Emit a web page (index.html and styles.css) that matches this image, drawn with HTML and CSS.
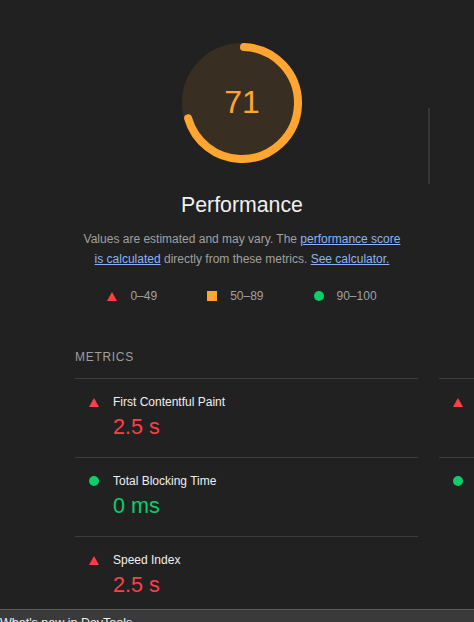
FILE: index.html
```
<!DOCTYPE html>
<html lang="en">
<head>
<meta charset="utf-8">
<title>Lighthouse – Performance</title>
<link rel="stylesheet" href="styles.css">
</head>
<body>
  <div class="app">
    <main class="report">
      <section class="cat-header">
        <div class="header-row">
          <div class="gauge-col">
            <div class="gauge">
              <svg class="gauge-svg" viewBox="0 0 120 120" width="120" height="120">
                <circle class="gauge-base" r="56" cx="60" cy="60" stroke-width="8"></circle>
                <circle class="gauge-arc" r="56" cx="60" cy="60" stroke-width="8"></circle>
              </svg>
              <div class="gauge-score">71</div>
            </div>
            <div class="gauge-label">Performance</div>
          </div>
          <div class="header-separator"></div>
        </div>
        <p class="description">Values are estimated and may vary. The <a href="#">performance score is calculated</a> directly from these metrics. <a href="#">See calculator.</a></p>
        <div class="legend">
          <span class="legend-item"><span class="icon icon-fail"></span>0–49</span>
          <span class="legend-item"><span class="icon icon-average"></span>50–89</span>
          <span class="legend-item"><span class="icon icon-pass"></span>90–100</span>
        </div>
      </section>

      <section class="metrics">
        <div class="metrics-title">Metrics</div>
        <div class="metrics-grid">
          <div class="metric">
            <div class="metric-icon"><span class="icon icon-fail"></span></div>
            <div class="metric-body">
              <div class="metric-title">First Contentful Paint</div>
              <div class="metric-value fail">2.5 s</div>
            </div>
          </div>
          <div class="metric metric-offscreen">
            <div class="metric-icon"><span class="icon icon-fail"></span></div>
          </div>
          <div class="metric">
            <div class="metric-icon"><span class="icon icon-pass"></span></div>
            <div class="metric-body">
              <div class="metric-title">Total Blocking Time</div>
              <div class="metric-value pass">0 ms</div>
            </div>
          </div>
          <div class="metric metric-offscreen">
            <div class="metric-icon"><span class="icon icon-pass"></span></div>
          </div>
          <div class="metric">
            <div class="metric-icon"><span class="icon icon-fail"></span></div>
            <div class="metric-body">
              <div class="metric-title">Speed Index</div>
              <div class="metric-value fail">2.5 s</div>
            </div>
          </div>
        </div>
      </section>
    </main>
    <footer class="drawer">What's new in DevTools</footer>
  </div>
</body>
</html>
```
FILE: styles.css
```
html, body {
  margin: 0;
  padding: 0;
  height: 100%;
  overflow: hidden;
}

body {
  background: #212121;
  color: #e8e8e8;
  font-family: "Liberation Sans", Arial, sans-serif;
  font-size: 12px;
  line-height: 20px;
}

.app {
  height: 622px;
  display: flex;
  flex-direction: column;
}

.report {
  flex: 1;
  overflow: hidden;
  padding: 43px 0 0 75px;
}

/* header */
.cat-header {
  width: 334px;
  display: flex;
  flex-direction: column;
  align-items: center;
}

.header-row {
  display: flex;
  align-items: flex-start;
  width: 334px;
}

.gauge-col {
  width: 334px;
  flex: none;
  display: flex;
  flex-direction: column;
  align-items: center;
}

.header-separator {
  flex: none;
  width: 2px;
  height: 76px;
  margin: 65px 0 0 19px;
  background: #363636;
}

.gauge {
  width: 120px;
  height: 120px;
  display: grid;
  place-items: center;
}

.gauge-svg,
.gauge-score {
  grid-area: 1 / 1;
}

.gauge-svg {
  display: block;
  stroke-linecap: round;
}

.gauge-base {
  fill: #ffa630;
  stroke: #ffa630;
  opacity: 0.1;
}

.gauge-arc {
  fill: none;
  stroke: #ffa630;
  stroke-dasharray: 245.82 351.86;
  transform-origin: 50% 50%;
  transform: rotate(-87.95deg);
}

.gauge-score {
  color: #ffa630;
  font-size: 32px;
  line-height: 32px;
  margin-bottom: 2px;
}

.gauge-label {
  margin-top: 30px;
  font-size: 21.3px;
  line-height: 24px;
  color: #f0f0f0;
}

.description {
  width: 326px;
  margin: 12px 0 0;
  text-align: center;
  color: #a0a0a0;
}

.description a {
  color: #8ab4f8;
  text-decoration: underline;
}

.legend {
  margin-top: 17px;
  display: flex;
  justify-content: center;
  gap: 50px;
  color: #a0a0a0;
}

.legend-item {
  display: flex;
  align-items: center;
  gap: 13px;
}

/* icons */
.icon {
  display: inline-block;
  flex: none;
}

.icon-fail {
  width: 0;
  height: 0;
  border-left: 5px solid transparent;
  border-right: 5px solid transparent;
  border-bottom: 9px solid #ff3f45;
}

.icon-average {
  width: 10px;
  height: 10px;
  background: #ffa630;
}

.icon-pass {
  width: 10px;
  height: 10px;
  border-radius: 50%;
  background: #0cce6b;
}

/* metrics */
.metrics {
  margin-top: 41px;
}

.metrics-title {
  text-transform: uppercase;
  letter-spacing: 0.7px;
  color: #9e9e9e;
}

.metrics-grid {
  margin-top: 11px;
  display: grid;
  grid-template-columns: 343px 343px;
  column-gap: 21px;
}

.metric {
  display: flex;
  border-top: 1px solid #3d3d3d;
  padding: 13px 0 17px 14px;
}

.metric-icon {
  height: 20px;
  width: 10px;
  margin-right: 14px;
  display: flex;
  align-items: center;
}

.metric-title {
  color: #f0f0f0;
}

.metric-value {
  font-size: 21.6px;
  line-height: 26px;
  padding-top: 2px;
}

.metric-value.fail {
  color: #ff3f45;
}

.metric-value.pass {
  color: #0cce6b;
}

/* devtools drawer */
.drawer {
  flex: none;
  height: 9px;
  border-top: 1px solid #5c5c5c;
  background: #3a3a3a;
  color: #f0f0f0;
  padding-top: 3px;
  font-size: 12.5px;
  overflow: hidden;
  white-space: nowrap;
}
```
